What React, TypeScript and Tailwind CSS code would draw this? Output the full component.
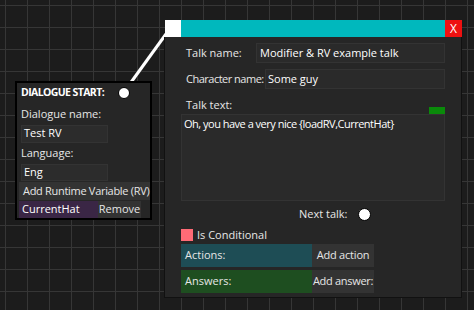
import React from "react";

const font = { fontFamily: '"Open Sans", "Noto Sans", sans-serif' };

export default function App() {
  return (
    <div
      className="relative w-[474px] h-[310px] overflow-hidden whitespace-nowrap bg-[#1c1c1c] bg-[linear-gradient(to_right,#363636_1px,transparent_1px),linear-gradient(to_bottom,#363636_1px,transparent_1px)] bg-[size:22px_22px] bg-[position:5px_5px] text-[11px] text-[#e6e6e6]"
      style={font}
    >
      {/* connection line */}
      <svg className="absolute left-0 top-0" width="474" height="310">
        <line x1="124" y1="92" x2="166" y2="34" stroke="#ffffff" strokeWidth="3" />
      </svg>

      {/* Dialogue start node */}
      <div className="absolute left-[15px] top-[81px] w-[137px] h-[139px] border-2 border-black bg-[#262626] flex flex-col px-[2px]">
        <div className="flex items-center h-[20px] pl-[2px]">
          <span className="font-bold text-white text-[10.5px] tracking-[-0.6px]">DIALOGUE START:</span>
          <span className="ml-auto mr-[18px] w-[12px] h-[12px] rounded-full bg-white border border-black"></span>
        </div>
        <div className="h-[20px] flex items-center pl-[2px] mt-[2px]">Dialogue name:</div>
        <div className="w-[87px] h-[18px] mt-[1px] ml-[2px] bg-[#2c2c2c] border border-[#333] flex items-center pl-[2px] text-white">Test RV</div>
        <div className="h-[20px] flex items-center pl-[2px] mt-[1px]">Language:</div>
        <div className="w-[87px] h-[17px] mt-[1px] ml-[2px] bg-[#2c2c2c] border border-[#333] flex items-center pl-[2px] text-white">Eng</div>
        <div className="w-[131px] h-[19px] mt-[1px] bg-[#333333] flex items-center pl-[4px] tracking-[-0.3px]">Add Runtime Variable (RV)</div>
        <div className="flex h-[17px] mt-[1px]">
          <div className="w-[79px] bg-[#3a2645] flex items-center pl-[3px] text-white">CurrentHat</div>
          <div className="w-[43px] bg-[#333333] flex items-center justify-center">Remove</div>
        </div>
      </div>

      {/* Talk node */}
      <div className="absolute left-[164px] top-[20px] w-[298px] flex flex-col">
        <div className="flex h-[17px]">
          <div className="w-[16px] bg-white ml-[1px]"></div>
          <div className="flex-1 bg-[#00b8bd]"></div>
          <div className="w-[17px] bg-[#ee1111] flex items-center justify-center text-white text-[12px]">X</div>
        </div>
        <div className="h-[261px] bg-[#262626] border border-[#111] border-t-0 flex flex-col pl-[16px] pr-[16px]">
          <div className="flex items-center h-[20px] mt-[6px]">
            <span className="w-[75px] pl-[5px]">Talk name:</span>
            <div className="flex-1 h-full bg-[#2a2a2a] border border-[#333] flex items-center pl-[3px] text-white">Modifier &amp; RV example talk</div>
          </div>
          <div className="flex items-center h-[20px] mt-[6px]">
            <span className="w-[84px] pl-[5px] tracking-[-0.5px]">Character name:</span>
            <div className="flex-1 h-full bg-[#2a2a2a] border border-[#333] flex items-center pl-[2px] text-white">Some guy</div>
          </div>
          <div className="flex items-end h-[25px]">
            <span className="pl-[5px] mb-[1px]">Talk text:</span>
            <span className="ml-auto w-[16px] h-[7px] bg-[#0a8a0a]"></span>
          </div>
          <div className="h-[87px] bg-[#2a2a2a] border border-[#333] pl-[2px] pt-[1px] text-white tracking-[-0.5px]">Oh, you have a very nice {"{loadRV,CurrentHat}"}</div>
          <div className="flex items-center h-[26px]">
            <span className="ml-[118px]">Next talk:</span>
            <span className="ml-[11px] w-[13px] h-[13px] rounded-full bg-white border border-black"></span>
          </div>
          <div className="flex items-center h-[14px] mt-[1px]">
            <span className="w-[12px] h-[12px] bg-[#ff6b76]"></span>
            <span className="ml-[4px]">Is Conditional</span>
          </div>
          <div className="flex h-[23px] mt-[2px]">
            <div className="w-[131px] bg-[#1e4d55] flex items-center pl-[4px]">Actions:</div>
            <div className="w-[62px] bg-[#333333] flex items-center justify-center tracking-[-0.2px]">Add action</div>
          </div>
          <div className="flex h-[23px] mt-[3px]">
            <div className="w-[131px] bg-[#1e4e20] flex items-center pl-[4px]">Answers:</div>
            <div className="w-[62px] bg-[#333333] flex items-center justify-center tracking-[-0.3px]">Add answer:</div>
          </div>
        </div>
      </div>
    </div>
  );
}
